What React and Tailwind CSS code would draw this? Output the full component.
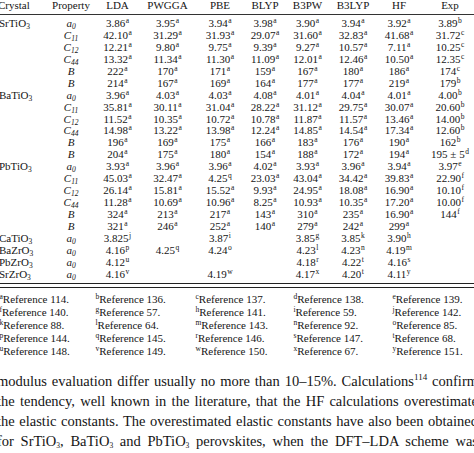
import React from 'react';

// column template: Crystal, Property, LDA, PWGGA, PBE, BLYP, B3PW, B3LYP, HF, Exp
const cols = 'grid grid-cols-[48px_48px_45px_55px_50px_40px_45px_46px_46px_56px]';

const Sup = ({ children }) => (
    <span className="text-[7.5px] relative -top-[4px] ml-[0.5px]">{children}</span>
);
const Sub = ({ children }) => (
    <span className="text-[7.5px] relative top-[2px]">{children}</span>
);

const v = (num, ref) => ({ num, ref });

const rows = [
    ['SrTiO', 'a0', [v('3.86', 'a'), v('3.95', 'a'), v('3.94', 'a'), v('3.98', 'a'), v('3.90', 'a'), v('3.94', 'a'), v('3.92', 'a'), v('3.89', 'b')]],
    ['', 'C11', [v('42.10', 'a'), v('31.29', 'a'), v('31.93', 'a'), v('29.07', 'a'), v('31.60', 'a'), v('32.83', 'a'), v('41.68', 'a'), v('31.72', 'c')]],
    ['', 'C12', [v('12.21', 'a'), v('9.80', 'a'), v('9.75', 'a'), v('9.39', 'a'), v('9.27', 'a'), v('10.57', 'a'), v('7.11', 'a'), v('10.25', 'c')]],
    ['', 'C44', [v('13.32', 'a'), v('11.34', 'a'), v('11.30', 'a'), v('11.09', 'a'), v('12.01', 'a'), v('12.46', 'a'), v('10.50', 'a'), v('12.35', 'c')]],
    ['', 'B', [v('222', 'a'), v('170', 'a'), v('171', 'a'), v('159', 'a'), v('167', 'a'), v('180', 'a'), v('186', 'a'), v('174', 'c')]],
    ['', 'B', [v('214', 'a'), v('167', 'a'), v('169', 'a'), v('164', 'a'), v('177', 'a'), v('177', 'a'), v('219', 'a'), v('179', 'b')]],
    ['BaTiO', 'a0', [v('3.96', 'a'), v('4.03', 'a'), v('4.03', 'a'), v('4.08', 'a'), v('4.01', 'a'), v('4.04', 'a'), v('4.01', 'a'), v('4.00', 'b')]],
    ['', 'C11', [v('35.81', 'a'), v('30.11', 'a'), v('31.04', 'a'), v('28.22', 'a'), v('31.12', 'a'), v('29.75', 'a'), v('30.07', 'a'), v('20.60', 'b')]],
    ['', 'C12', [v('11.52', 'a'), v('10.35', 'a'), v('10.72', 'a'), v('10.78', 'a'), v('11.87', 'a'), v('11.57', 'a'), v('13.46', 'a'), v('14.00', 'b')]],
    ['', 'C44', [v('14.98', 'a'), v('13.22', 'a'), v('13.98', 'a'), v('12.24', 'a'), v('14.85', 'a'), v('14.54', 'a'), v('17.34', 'a'), v('12.60', 'b')]],
    ['', 'B', [v('196', 'a'), v('169', 'a'), v('175', 'a'), v('166', 'a'), v('183', 'a'), v('176', 'a'), v('190', 'a'), v('162', 'b')]],
    ['', 'B', [v('204', 'a'), v('175', 'a'), v('180', 'a'), v('154', 'a'), v('188', 'a'), v('172', 'a'), v('194', 'a'), v('195 \u00b1 5', 'd')]],
    ['PbTiO', 'a0', [v('3.93', 'a'), v('3.96', 'a'), v('3.96', 'a'), v('4.02', 'a'), v('3.93', 'a'), v('3.96', 'a'), v('3.94', 'a'), v('3.97', 'e')]],
    ['', 'C11', [v('45.03', 'a'), v('32.47', 'a'), v('4.25', 'q'), v('23.03', 'a'), v('43.04', 'a'), v('34.42', 'a'), v('39.83', 'a'), v('22.90', 'f')]],
    ['', 'C12', [v('26.14', 'a'), v('15.81', 'a'), v('15.52', 'a'), v('9.93', 'a'), v('24.95', 'a'), v('18.08', 'a'), v('16.90', 'a'), v('10.10', 'f')]],
    ['', 'C44', [v('11.28', 'a'), v('10.69', 'a'), v('10.96', 'a'), v('8.25', 'a'), v('10.93', 'a'), v('10.35', 'a'), v('17.20', 'a'), v('10.00', 'f')]],
    ['', 'B', [v('324', 'a'), v('213', 'a'), v('217', 'a'), v('143', 'a'), v('310', 'a'), v('235', 'a'), v('16.90', 'a'), v('144', 'f')]],
    ['', 'B', [v('321', 'a'), v('246', 'a'), v('252', 'a'), v('140', 'a'), v('279', 'a'), v('242', 'a'), v('299', 'a'), null]],
    ['CaTiO', 'a0', [v('3.825', 'j'), null, v('3.87', 'i'), null, v('3.85', 'g'), v('3.85', 'k'), v('3.90', 'h'), null]],
    ['BaZrO', 'a0', [v('4.16', 'p'), v('4.25', 'q'), v('4.24', 'o'), null, v('4.23', 'l'), v('4.23', 'n'), v('4.19', 'm'), null]],
    ['PbZrO', 'a0', [v('4.12', 'u'), null, null, null, v('4.18', 'r'), v('4.22', 't'), v('4.16', 's'), null]],
    ['SrZrO', 'a0', [v('4.16', 'v'), null, v('4.19', 'w'), null, v('4.17', 'x'), v('4.20', 't'), v('4.11', 'y'), null]],
];

const footnotes = [
    [['a', '114'], ['b', '136'], ['c', '137'], ['d', '138'], ['e', '139']],
    [['f', '140'], ['g', '57'], ['h', '141'], ['i', '59'], ['j', '142']],
    [['k', '88'], ['l', '64'], ['m', '143'], ['n', '92'], ['o', '85']],
    [['p', '144'], ['q', '145'], ['r', '146'], ['s', '147'], ['t', '68']],
    [['u', '148'], ['v', '149'], ['w', '150'], ['x', '67'], ['y', '151']],
];

function Property({ p }) {
    if (p === 'B') return <span className="italic">B</span>;
    if (p === 'a0') return <span className="italic">a<Sub>0</Sub></span>;
    return <span className="italic">C<Sub>{p.slice(1)}</Sub></span>;
}

function Line({ children }) {
    return (
        <div className="h-[20px] leading-[20px] text-justify [text-align-last:justify]">
            {children}
        </div>
    );
}

export default function App() {
    return (
        <div className="w-[474px] h-[453px] overflow-hidden bg-white text-[#151515] font-['Liberation_Serif',serif]">
            <div className="ml-[-1px] text-[11px]">
                <div className={`${cols} h-[14px] leading-[10px] items-start`}>
                    <div className="-ml-[1px]">Crystal</div>
                    <div className="text-center">Property</div>
                    {['LDA', 'PWGGA', 'PBE', 'BLYP', 'B3PW', 'B3LYP', 'HF', 'Exp'].map((h) => (
                        <div key={h} className="text-center">{h}</div>
                    ))}
                </div>
                <div className="h-px bg-[#333] w-[480px]" />
                <div className="pt-[2px]">
                    {rows.map(([crystal, prop, vals], i) => (
                        <div key={i} className={`${cols} h-[11.95px] leading-[12px]`}>
                            <div className="whitespace-nowrap">
                                {crystal && <>{crystal}<Sub>3</Sub></>}
                            </div>
                            <div className="text-center"><Property p={prop} /></div>
                            {vals.map((val, j) => (
                                <div key={j} className="text-center whitespace-nowrap">
                                    {val && <>{val.num}<Sup>{val.ref}</Sup></>}
                                </div>
                            ))}
                        </div>
                    ))}
                </div>
                <div className="mt-[3px] w-[480px] h-[5px] border-t-[1.5px] border-b-[1.5px] border-[#222]" />
            </div>
            <div className="ml-[-1px] mt-[5px] text-[11px]">
                {footnotes.map((row, i) => (
                    <div key={i} className="grid grid-cols-[96px_100px_98px_99px_82px] h-[13px] leading-[13px]">
                        {row.map(([k, n]) => (
                            <div key={k} className="whitespace-nowrap">
                                <Sup>{k}</Sup>Reference {n}.
                            </div>
                        ))}
                    </div>
                ))}
            </div>
            <div className="ml-[-3px] w-[481px] mt-[13px] text-[14.5px]">
                <Line>modulus evaluation differ usually no more than 10–15%. Calculations<span className="text-[9px] relative -top-[6px]">114</span> confirm</Line>
                <Line>the tendency, well known in the literature, that the HF calculations overestimate</Line>
                <Line>the elastic constants. The overestimated elastic constants have also been obtained</Line>
                <Line>for SrTiO<Sub>3</Sub>, BaTiO<Sub>3</Sub> and PbTiO<Sub>3</Sub> perovskites, when the DFT–LDA scheme was</Line>
                <Line>used. In the case of cubic SrTiO<Sub>3</Sub>, which is experimentally well investigated, al-</Line>
            </div>
        </div>
    );
}
